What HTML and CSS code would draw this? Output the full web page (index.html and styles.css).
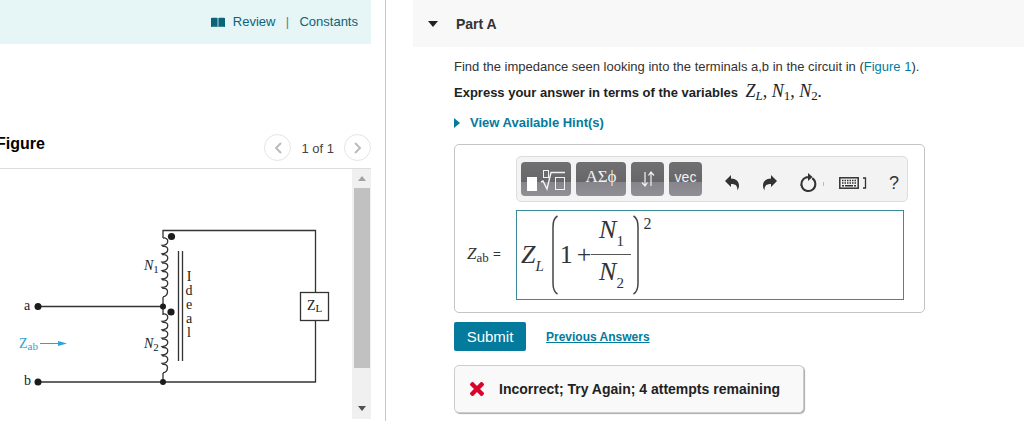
FILE: index.html
```html
<!DOCTYPE html>
<html lang="en">
<head>
    <meta charset="UTF-8">
    <meta name="viewport" content="width=device-width, initial-scale=1.0">
    <title>Part A</title>
    <link rel="stylesheet" href="styles.css">
</head>
<body>
<div class="page">
    <aside class="side">
        <nav class="review-bar">
            <svg class="book" width="14" height="11" viewBox="0 0 14 11" aria-hidden="true">
                <path d="M0 1C2 .5 5 .5 6.600 1v9C5 9.500 2 9.500 0 10zM7.400 1C9 .5 12 .5 14 1v9C12 9.500 9 9.500 7.400 10z" fill="#0b6478"/>
            </svg>
            <a href="#review">Review</a>
            <span class="bar">|</span>
            <a href="#constants">Constants</a>
        </nav>

        <div class="figure-head">
            <h2>Figure</h2>
            <div class="pager">
                <button type="button" aria-label="Previous figure">
                    <svg width="8" height="12" viewBox="0 0 8 12"><path d="M7 1L2 6l5 5"/></svg>
                </button>
                <span>1 of 1</span>
                <button type="button" aria-label="Next figure">
                    <svg width="8" height="12" viewBox="0 0 8 12"><path d="M1 1l5 5-5 5"/></svg>
                </button>
            </div>
        </div>

        <div class="figure-body" id="figure1">
            <svg class="circuit" viewBox="0 169 352 250" role="img" aria-label="Ideal transformer circuit">
                <!-- wires -->
                <g fill="none" stroke="#333" stroke-width="1.300">
                    <path d="M163 238v-7.500h152.500V292M315.500 320v62H38M38 306.500h125M163 297v18M163 373v9"/>
                    <!-- coils -->
                    <path d="M163 238c6-1 7 7-1 7.400l1 1c6-1 7 7-1 7.400l1 1c6-1 7 7-1 7.400l1 1c6-1 7 7-1 7.400l1 1c6-1 7 7-1 7.400l1 1c6-1 7 7-1 7.400l1 1c6-1 6 7 0 8.500"/>
                    <path d="M163 314c6-1 7 7-1 7.400l1 1c6-1 7 7-1 7.400l1 1c6-1 7 7-1 7.400l1 1c6-1 7 7-1 7.400l1 1c6-1 7 7-1 7.400l1 1c6-1 7 7-1 7.400l1 1c6-1 6 7 0 8.500"/>
                    <path d="M178.500 251v110M182.500 251v110"/>
                    <rect x="300.500" y="292.500" width="28" height="28"/>
                </g>
                <g fill="#1c1c1c">
                    <circle cx="38" cy="306.500" r="3.500"/>
                    <circle cx="38" cy="382" r="3.500"/>
                    <circle cx="163" cy="306.500" r="3"/>
                    <circle cx="163" cy="382" r="3"/>
                    <circle cx="171.500" cy="236.500" r="3.600"/>
                    <circle cx="171" cy="312" r="3.600"/>
                </g>
                <g class="labels">
                    <text x="24" y="310">a</text>
                    <text x="24" y="385">b</text>
                    <text x="144" y="270"><tspan class="it">N</tspan><tspan class="sub" dy="3">1</tspan></text>
                    <text x="144" y="348"><tspan class="it">N</tspan><tspan class="sub" dy="3">2</tspan></text>
                    <text x="307" y="310">Z<tspan class="sub" dy="2">L</tspan></text>
                    <g text-anchor="middle">
                        <text x="189" y="281">I</text>
                        <text x="189" y="295">d</text>
                        <text x="189" y="309">e</text>
                        <text x="189" y="323">a</text>
                        <text x="189" y="337">l</text>
                    </g>
                    <text class="blue" x="19" y="348">Z<tspan class="sub" dy="2">ab</tspan></text>
                </g>
                <path d="M40 343.500h20" stroke="#2aa5d5"/>
                <path d="M58 341l9 2.500-9 2.500z" fill="#2aa5d5"/>
            </svg>
            <div class="scrollbar" aria-hidden="true">
                <span class="arrow up"></span>
                <span class="thumb"></span>
                <span class="arrow down"></span>
            </div>
        </div>
    </aside>

    <main class="main">
        <header class="part-head">
            <span class="caret"></span>
            <h1>Part A</h1>
        </header>

        <section class="part">
            <p class="question">Find the impedance seen looking into the terminals a,b in the circuit in (<a href="#figure1">Figure 1</a>).</p>
            <p class="express">Express your answer in terms of the variables <span class="math"><i>Z<sub>L</sub></i>, <i>N</i><sub>1</sub>, <i>N</i><sub>2</sub></span>.</p>
            <a class="hints" href="#hints"><span class="tri"></span>View Available Hint(s)</a>

            <div class="answer">
                <label class="answer-label" id="zab"><i>Z</i><sub>ab</sub> <span class="eq">=</span></label>
                <div class="editor">
                    <div class="toolbar">
                        <button type="button" class="key wide" aria-label="Templates">
                            <svg width="40" height="26" viewBox="0 0 40 26">
                                <rect x="1" y="11" width="10" height="14" fill="#fff"/>
                                <g fill="none" stroke="#f2f2f2">
                                    <rect x="17.500" y="4.500" width="5" height="7"/>
                                    <path d="M15 16l2-1 4 8 4-16.500h14" stroke-width="1.400"/>
                                    <rect x="29.500" y="11.500" width="9" height="12"/>
                                </g>
                            </svg>
                        </button>
                        <button type="button" class="key wide greek">ΑΣϕ</button>
                        <button type="button" class="key" aria-label="Subscript and superscript">
                            <svg width="14" height="18" viewBox="0 0 14 18" fill="none" stroke="#f2f2f2" stroke-width="1.200"><path d="M4 2v14M1 12.500l3 3.500 2.500-3.500M10 16V2M7.500 5.500L10 2l3 3.500"/></svg>
                        </button>
                        <button type="button" class="key vec">vec</button>
                        <div class="tools">
                            <button type="button" aria-label="Undo">
                                <svg width="16" height="16" viewBox="0 0 16 16"><path d="M1 6L7 0v3.500c5 0 8 3 8 7 0 2-.7 3.500-1.500 5C13.500 11 12 9 7 9v3z"/></svg>
                            </button>
                            <button type="button" aria-label="Redo">
                                <svg width="16" height="16" viewBox="0 0 16 16"><path d="M15 6L9 0v3.500c-5 0-8 3-8 7 0 2 .7 3.500 1.500 5C2.500 11 4 9 9 9v3z"/></svg>
                            </button>
                            <button type="button" aria-label="Reset">
                                <svg class="reset" width="18" height="20" viewBox="0 0 18 20"><path d="M13.200 5.200A7 7 0 1 1 7.500 4.300H10" fill="none" stroke="#333" stroke-width="2"/><path d="M9 0l4.500 4L9 8z"/><path d="M24.500 9v4" fill="none" stroke="#bbb"/></svg>
                            </button>
                            <button type="button" aria-label="Keyboard shortcuts">
                                <svg width="28" height="14" viewBox="0 0 28 14">
                                    <rect x=".8" y="1.800" width="18.400" height="10.400" fill="none" stroke="#333" stroke-width="1.500"/>
                                    <path d="M3 4.500h14M3 7h14" stroke="#333" stroke-width="1.300" stroke-dasharray="1.500 1"/>
                                    <path d="M3 9.700h2M6 9.700h8M15 9.700h2" stroke="#333" stroke-width="1.500"/>
                                    <path d="M24 2h2.500v10H24" fill="none" stroke="#333" stroke-width="1.300"/>
                                </svg>
                            </button>
                            <button type="button" class="help" aria-label="Help">?</button>
                        </div>
                    </div>
                    <div class="field" role="textbox" tabindex="0" aria-labelledby="zab">
                        <span class="zl"><i>Z</i><sub><i>L</i></sub></span>
                        <svg class="paren" width="6" height="80" viewBox="0 0 6 80"><path d="M5.500 1C2 3 1 6 1 12v56c0 6 1 9 4.500 11"/></svg>
                        <span class="one">1</span>
                        <span class="plus">+</span>
                        <span class="frac">
                            <span class="num"><i>N</i><sub>1</sub></span>
                            <span class="den"><i>N</i><sub>2</sub></span>
                        </span>
                        <svg class="paren" width="6" height="80" viewBox="0 0 6 80"><path d="M.5 1C4 3 5 6 5 12v56c0 6-1 9-4.500 11"/></svg>
                        <span class="power">2</span>
                    </div>
                </div>
            </div>

            <div class="actions">
                <button type="button" class="submit">Submit</button>
                <a href="#previous">Previous Answers</a>
            </div>

            <div class="feedback">
                <svg width="14" height="14" viewBox="0 0 14 14" aria-hidden="true"><path d="M2.500 2.500l9 9M11.500 2.500l-9 9" stroke="#d9042b" stroke-width="4.400" stroke-linecap="square"/></svg>
                <span>Incorrect; Try Again; 4 attempts remaining</span>
            </div>
        </section>
    </main>
</div>
</body>
</html>
```
FILE: styles.css
```css
* {
    box-sizing: border-box;
}

body {
    margin: 0;
    background: #fff;
    color: #333;
    font-family: "Liberation Sans", Arial, sans-serif;
    font-size: 13px;
    line-height: 18px;
}

a {
    color: #047a9c;
    text-decoration: none;
}

button {
    font-family: inherit;
    cursor: pointer;
}

h1, h2, p {
    margin: 0;
}

sub {
    line-height: 0;
}

.page {
    display: flex;
    align-items: flex-start;
}

/* Left side */
.side {
    flex: 0 0 386px;
    padding: 0 14px 2px 0;
    border-right: 1px solid #c3c7cf;
    overflow: hidden;
}

.review-bar {
    display: flex;
    align-items: center;
    justify-content: flex-end;
    height: 44px;
    padding-right: 13px;
    background: #e6f5f6;
}

.review-bar a {
    color: #0b6478;
}

.book {
    margin-right: 8px;
}

.bar {
    width: 24px;
    text-align: center;
    color: #777;
}

.figure-head {
    display: flex;
    align-items: flex-end;
    justify-content: space-between;
    height: 125px;
    padding-bottom: 7px;
    border-bottom: 1px solid #ddd;
}

.figure-head h2 {
    margin: 0 0 8px -4px;
    color: #000;
    font-size: 16px;
}

.pager {
    display: flex;
    align-items: center;
    gap: 10px;
}

.pager span {
    padding-top: 3px;
    color: #444;
}

.pager button {
    display: flex;
    align-items: center;
    justify-content: center;
    width: 27px;
    height: 27px;
    padding: 0;
    border: 1px solid #e4e4e4;
    border-radius: 50%;
    background: #fff;
}

.pager path {
    fill: none;
    stroke: #bbb;
    stroke-width: 2;
}

.figure-body {
    display: flex;
}

.circuit {
    flex: 1;
    min-width: 0;
}

.labels {
    fill: #222;
    font-family: "Liberation Serif", "Times New Roman", serif;
    font-size: 14px;
}

.labels .sub {
    font-size: 11px;
}

.labels .it {
    font-style: italic;
}

.labels .blue {
    fill: #2aa5d5;
}

.scrollbar {
    display: flex;
    flex-direction: column;
    align-items: center;
    width: 19px;
    background: #f0f0f0;
}

.arrow {
    border: 4px solid transparent;
}

.up {
    margin: 3px 0 7px;
    border-bottom: 5px solid #a3a3a3;
}

.thumb {
    width: 16px;
    height: 180px;
    background: #c1c1c1;
}

.down {
    margin: auto 0 4px;
    border-top: 5px solid #505050;
}

/* Right side */
.main {
    flex: 1;
    min-width: 0;
    padding-left: 27px;
}

.part-head {
    display: flex;
    align-items: center;
    gap: 18px;
    height: 47px;
    padding-left: 15px;
    background: #f8f8f8;
}

.part-head h1 {
    font-size: 14px;
}

.caret {
    border: 5px solid transparent;
    border-top: 6px solid #222;
    border-bottom: 0;
}

.part {
    padding: 11px 0 0 41px;
}

.express {
    margin-top: 6px;
    color: #222;
    font-weight: bold;
}

.math {
    margin-left: 4px;
    font-family: "Liberation Serif", "Times New Roman", serif;
    font-size: 18px;
    font-weight: normal;
}

.math sub {
    font-size: 13px;
    vertical-align: -3px;
}

.hints {
    display: flex;
    align-items: center;
    margin-top: 12px;
    font-weight: bold;
}

.tri {
    margin-right: 10px;
    border: 5px solid transparent;
    border-left: 6px solid #047a9c;
    border-right: 0;
}

.answer {
    display: flex;
    align-items: flex-end;
    width: 100%;
    max-width: 471px;
    margin-top: 12px;
    padding: 11px 20px 12px 12px;
    border: 1px solid #c4c4c4;
    border-radius: 5px;
}

.answer-label {
    flex: 0 0 49px;
    padding-bottom: 36px;
    font-family: "Liberation Serif", "Times New Roman", serif;
    font-size: 17px;
}

.answer-label sub {
    font-size: 13px;
    vertical-align: -3px;
}

.eq {
    font-size: 14px;
    font-weight: bold;
}

.editor {
    flex: 1;
    min-width: 0;
}

.toolbar {
    display: flex;
    align-items: center;
    gap: 5px;
    height: 46px;
    margin-right: -4px;
    padding: 0 4px;
    border: 1px solid #ddd;
    border-radius: 5px;
    background: #f3f3f3;
}

.key {
    display: flex;
    align-items: center;
    justify-content: center;
    width: 33px;
    height: 34px;
    padding: 0;
    border: 0;
    border-radius: 4px;
    background: linear-gradient(#707073, #67676a 58%, #85858b 58%, #8f8f95);
    color: #f2f2f2;
    font-size: 14px;
}

.wide {
    width: 50px;
}

.greek {
    padding-bottom: 4px;
    font-family: "Liberation Serif", "Times New Roman", serif;
    font-size: 17px;
}

.vec {
    padding-bottom: 4px;
}

.tools {
    display: flex;
    flex: 1;
    align-items: center;
    justify-content: space-between;
    padding: 8px 4px 0 17px;
}

.tools button {
    display: flex;
    padding: 0;
    border: 0;
    background: none;
}

.tools path {
    fill: #333;
}

.tools path[fill="none"] {
    fill: none;
}

.tools .reset {
    overflow: visible;
}

.tools .help {
    color: #333;
    font-size: 18px;
}

.field {
    display: flex;
    align-items: center;
    height: 90px;
    margin-top: 8px;
    padding: 0 4px;
    border: 1px solid #3a8a99;
    font-family: "Liberation Serif", "Times New Roman", serif;
    font-size: 26px;
    line-height: 26px;
}

.field sub {
    font-size: 15px;
    vertical-align: -8px;
}

.zl {
    margin-right: 8px;
}

.paren path {
    fill: none;
    stroke: #444;
    stroke-width: 1.5;
}

.one {
    margin: 0 4px 0 2px;
}

.frac {
    display: flex;
    flex-direction: column;
    align-items: center;
    width: 40px;
    margin-right: 2px;
}

.num,
.den {
    width: 100%;
    height: 42px;
    padding-top: 4px;
    text-align: center;
}

.num {
    border-bottom: 1px solid #555;
}

.power {
    align-self: flex-start;
    margin-left: 4px;
    font-size: 16px;
}

.actions {
    display: flex;
    align-items: center;
    gap: 20px;
    margin-top: 9px;
}

.submit {
    width: 72px;
    height: 29px;
    padding: 0;
    border: 0;
    border-radius: 2px;
    background: #047a9c;
    color: #fff;
    font-size: 15px;
}

.actions a {
    font-size: 12px;
    font-weight: bold;
    text-decoration: underline;
}

.feedback {
    display: flex;
    align-items: center;
    gap: 15px;
    width: fit-content;
    min-width: 350px;
    height: 48px;
    margin-top: 14px;
    padding: 0 14px 0 15px;
    border: 1px solid #ccc;
    border-radius: 5px;
    background: #f9f9f9;
    box-shadow: 1px 1px 1px #aaa;
    color: #222;
    font-size: 14px;
    font-weight: bold;
}
```
